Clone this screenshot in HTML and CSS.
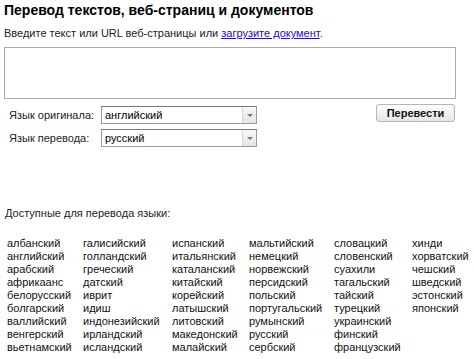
FILE: index.html
```html
<!DOCTYPE html>
<html>
<head>
  <title>Перевод</title>
  <link rel="stylesheet" href="styles.css">
</head>
<body>
  <h2 class="title">Перевод текстов, веб-страниц и документов</h2>
  <p class="intro">Введите текст или URL веб-страницы или <a href="#">загрузите документ</a>.</p>

  <div class="source"></div>

  <div class="controls">
    <div class="langs">
      <div class="row">
        <span class="label">Язык оригинала:</span>
        <div class="select"><span class="value">английский</span><span class="arrow"></span></div>
      </div>
      <div class="row">
        <span class="label">Язык перевода:</span>
        <div class="select"><span class="value">русский</span><span class="arrow"></span></div>
      </div>
    </div>
    <button class="go">Перевести</button>
  </div>

  <p class="avail">Доступные для перевода языки:</p>

  <div class="list">
    <ul>
      <li>албанский</li><li>английский</li><li>арабский</li><li>африкаанс</li><li>белорусский</li><li>болгарский</li><li>валлийский</li><li>венгерский</li><li>вьетнамский</li>
    </ul>
    <ul>
      <li>галисийский</li><li>голландский</li><li>греческий</li><li>датский</li><li>иврит</li><li>идиш</li><li>индонезийский</li><li>ирландский</li><li>исландский</li>
    </ul>
    <ul>
      <li>испанский</li><li>итальянский</li><li>каталанский</li><li>китайский</li><li>корейский</li><li>латышский</li><li>литовский</li><li>македонский</li><li>малайский</li>
    </ul>
    <ul>
      <li>мальтийский</li><li>немецкий</li><li>норвежский</li><li>персидский</li><li>польский</li><li>португальский</li><li>румынский</li><li>русский</li><li>сербский</li>
    </ul>
    <ul>
      <li>словацкий</li><li>словенский</li><li>суахили</li><li>тагальский</li><li>тайский</li><li>турецкий</li><li>украинский</li><li>финский</li><li>французский</li>
    </ul>
    <ul>
      <li>хинди</li><li>хорватский</li><li>чешский</li><li>шведский</li><li>эстонский</li><li>японский</li>
    </ul>
  </div>
</body>
</html>
```

FILE: styles.css
```css
body {
  font-family: 'Liberation Sans', Arial, sans-serif;
  background: #fff;
  color: #000;
  margin: 0;
  padding: 0 4px;
  font-size: 11px;
}

.title {
  font-size: 14px;
  font-weight: bold;
  margin: 0;
  padding-top: 2px;
  line-height: 17px;
}

.intro {
  margin: 7px 0 0 0;
  font-size: 11px;
  line-height: 14px;
  color: #222;
}

.intro a {
  color: #1a0dcc;
}

.source {
  margin-top: 7px;
  width: 450px;
  height: 50px;
  border: 1px solid #aaa;
}

.controls {
  display: flex;
  justify-content: space-between;
  width: 452px;
  margin-top: 5px;
}

.langs {
  padding-top: 2px;
}

.row {
  display: flex;
  align-items: center;
  margin-bottom: 5px;
}

.label {
  width: 92px;
  padding-left: 5px;
  color: #222;
}

.select {
  display: flex;
  width: 154px;
  height: 16px;
  border: 1px solid #9a9a9a;
  border-top-color: #7a7a7a;
}

.value {
  flex: 1;
  padding-left: 3px;
  line-height: 16px;
}

.arrow {
  width: 13px;
  border-left: 1px solid #d8d8d8;
  background: linear-gradient(#f8f8f8, #e4e4e4);
  position: relative;
}

.arrow::after {
  content: "";
  position: absolute;
  left: 4px;
  top: 7px;
  border-left: 3px solid transparent;
  border-right: 3px solid transparent;
  border-top: 3px solid #777;
}

.go {
  align-self: flex-start;
  margin-right: 1px;
  height: 18px;
  width: 79px;
  padding: 0;
  font-family: 'Liberation Sans', Arial, sans-serif;
  font-size: 11px;
  font-weight: bold;
  color: #111;
  border: 1px solid #b5b5b5;
  border-radius: 3px;
  background: linear-gradient(#fdfdfd, #e6e6e6);
}

.avail {
  margin: 54px 0 0 1px;
  line-height: 14px;
  color: #222;
}

.list {
  display: flex;
  margin-top: 17px;
  padding-left: 3px;
}

.list ul {
  list-style: none;
  margin: 0;
  padding: 0;
  line-height: 13px;
  color: #111;
}

.list ul:nth-child(1) { width: 76px; }
.list ul:nth-child(2) { width: 89px; }
.list ul:nth-child(3) { width: 77px; }
.list ul:nth-child(4) { width: 85px; }
.list ul:nth-child(5) { width: 78px; }
```
